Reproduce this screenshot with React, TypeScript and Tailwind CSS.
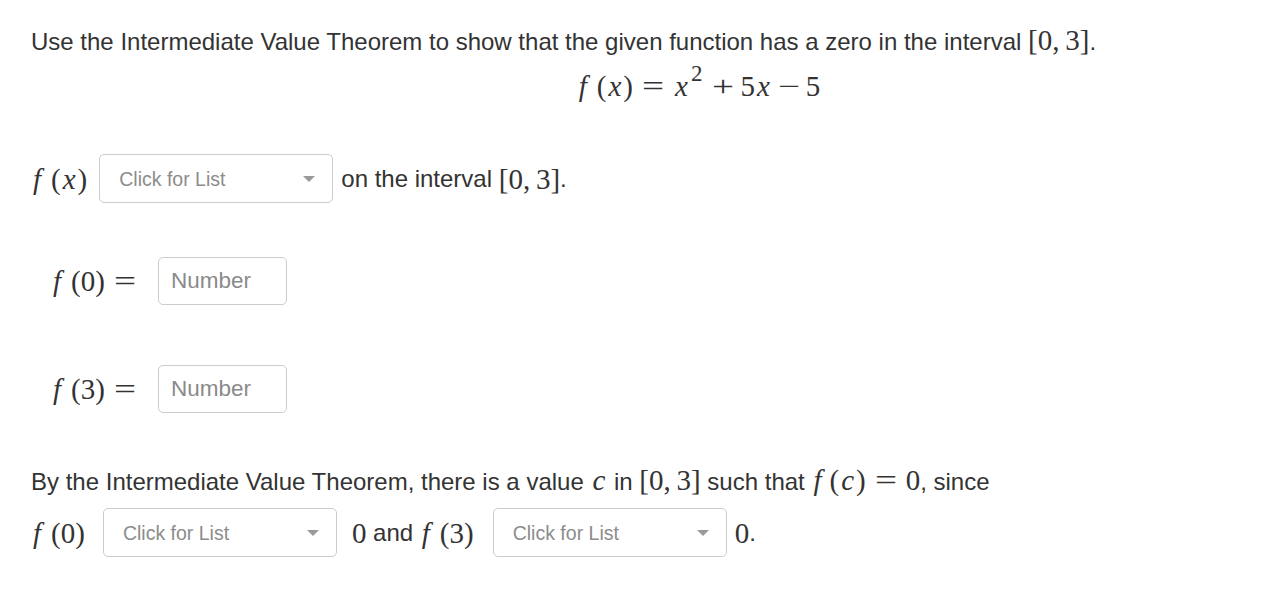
const sans = { fontFamily: '"Liberation Sans", Arial, sans-serif' };

function M({ children, className = '' }: { children: React.ReactNode; className?: string }) {
  return (
    <span className={`whitespace-nowrap text-[29px] ${className}`} style={{ fontFamily: '"Liberation Serif", "Times New Roman", serif' }}>
      {children}
    </span>
  );
}

// italic variable, padded a little to approach the wider TeX glyphs
function I({ children }: { children: React.ReactNode }) {
  return <i className="inline-block px-[2px] italic">{children}</i>;
}

function F() {
  return <i className="inline-block pl-[2px] pr-[4px] italic">f</i>;
}

function Op({ children, rel = false }: { children: React.ReactNode; rel?: boolean }) {
  return (
    <span className={`inline-block w-[22px] scale-x-[1.35] text-center ${rel ? 'mx-[9px]' : 'mx-[6px]'}`}>{children}</span>
  );
}

function Fn({ arg, italicArg = false }: { arg: string; italicArg?: boolean }) {
  return (
    <M>
      <F />
      <span className="ml-[6px]">(</span>
      {italicArg ? <I>{arg}</I> : arg}
      <span>)</span>
    </M>
  );
}

function Interval() {
  return <M>[0,&thinsp;3]</M>;
}

function ListSelect({ className = '' }: { className?: string }) {
  return (
    <div
      className={`flex h-[49px] w-[234px] shrink-0 items-center justify-between rounded-[5px] border border-[#cccccc] bg-white pl-[19px] pr-[17px] ${className}`}
    >
      <span className="text-[19.5px] text-[#8c8c8c]">Click for List</span>
      <svg width="12" height="6" viewBox="0 0 12 6">
        <path d="M0 0h12L6 6z" fill="#9a9a9a" />
      </svg>
    </div>
  );
}

function NumberInput() {
  return (
    <div className="flex h-[48px] w-[129px] items-center rounded-[5px] border border-[#cccccc] bg-white pl-[12px]">
      <span className="text-[22.5px] text-[#8a8a8a]">Number</span>
    </div>
  );
}

export default function App() {
  return (
    <div className="min-h-[602px] bg-white pl-[31px] pt-[24px] text-[24px] leading-[32px] text-[#333333]" style={sans}>
      <div className="flex h-[32px] items-baseline">
        <span>Use the Intermediate Value Theorem to show that the given function has a zero in the interval&nbsp;</span>
        <Interval />
        <span>.</span>
      </div>

      <div className="mt-[13px] flex h-[36px] items-end justify-center pl-[88px]">
        <M>
          <F />
          <span className="ml-[6px]">(</span>
          <I>x</I>)<Op rel>=</Op>
          <I>x</I>
          <span className="relative -top-[15px] ml-[1px] mr-[4px] text-[23px]">2</span>
          <Op>+</Op>5<I>x</I>
          <Op>&minus;</Op>5
        </M>
      </div>

      <div className="mt-[49px] flex items-center">
        <Fn arg="x" italicArg />
        <ListSelect className="ml-[12px] mr-[8px]" />
        <span>on the interval&nbsp;</span>
        <Interval />
        <span>.</span>
      </div>

      <div className="ml-[20px] mt-[54px] flex items-center">
        <M>
          <F />
          <span className="ml-[6px]">(0)</span>
          <Op rel>=</Op>
        </M>
        <div className="ml-[13px]">
          <NumberInput />
        </div>
      </div>

      <div className="ml-[20px] mt-[60px] flex items-center">
        <M>
          <F />
          <span className="ml-[6px]">(3)</span>
          <Op rel>=</Op>
        </M>
        <div className="ml-[13px]">
          <NumberInput />
        </div>
      </div>

      <div className="mt-[51px] flex h-[32px] items-baseline">
        <span>By the Intermediate Value Theorem, there is a value&nbsp;</span>
        <M>
          <I>c</I>
        </M>
        <span>&nbsp;in&nbsp;</span>
        <Interval />
        <span>&nbsp;such that&nbsp;</span>
        <M>
          <F />
          <span className="ml-[4px]">(</span>
          <I>c</I>)<Op rel>=</Op>0
        </M>
        <span>, since</span>
      </div>

      <div className="mt-[12px] flex items-center">
        <Fn arg="0" />
        <ListSelect className="ml-[18px] mr-[15px]" />
        <M>0</M>
        <span>&nbsp;and&nbsp;</span>
        <Fn arg="3" />
        <ListSelect className="ml-[19px] mr-[8px]" />
        <M>0</M>
        <span>.</span>
      </div>
    </div>
  );
}
